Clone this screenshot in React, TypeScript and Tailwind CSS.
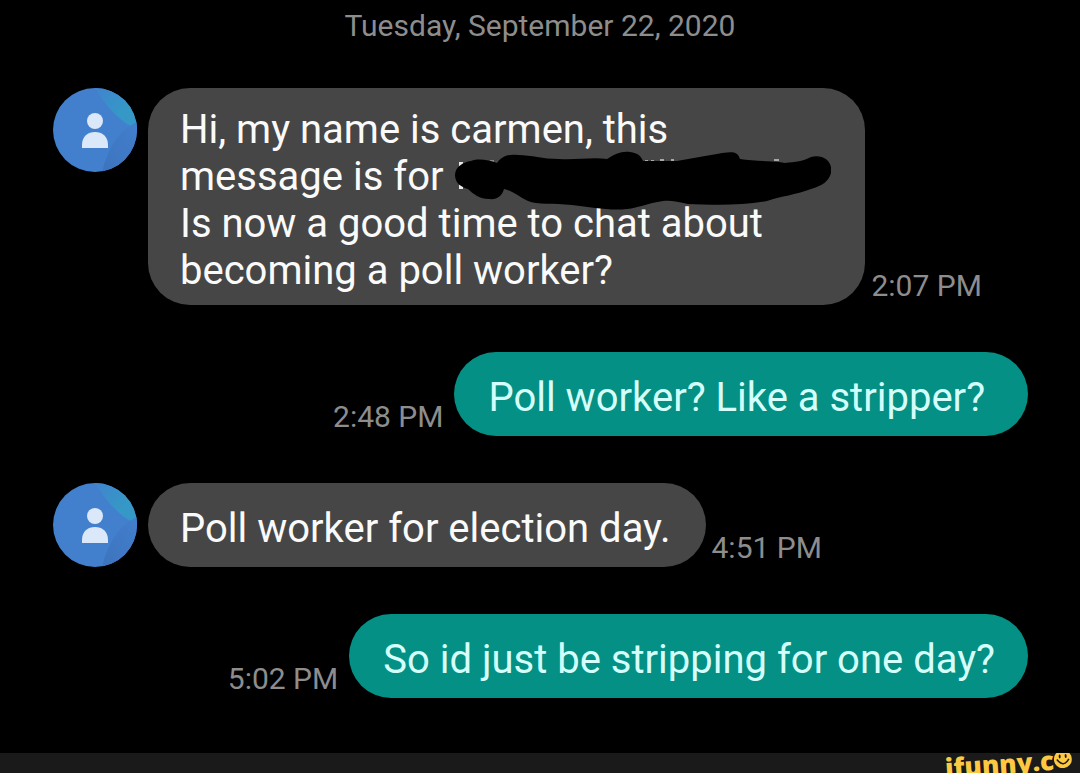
import type { ReactNode } from 'react'

function Avatar() {
  return (
    <svg viewBox="0 0 84 84" className="size-[84px] shrink-0" role="img" aria-label="Contact">
      <defs>
        <clipPath id="avatar-circle">
          <circle cx="42" cy="42" r="42" />
        </clipPath>
        <linearGradient id="avatar-shine" x1="0" y1="0" x2="1" y2="1">
          <stop offset="0" stopColor="#4183cf" />
          <stop offset="0.6" stopColor="#3598c6" />
        </linearGradient>
        <linearGradient id="avatar-shade" x1="0" y1="1" x2="1" y2="0">
          <stop offset="0" stopColor="#3d73bd" />
          <stop offset="1" stopColor="#427fcd" />
        </linearGradient>
      </defs>
      <g clipPath="url(#avatar-circle)">
        <rect width="84" height="84" fill="#427fcd" />
        <path d="M42 0H84V42L74 36C62 28 50 14 42 0Z" fill="url(#avatar-shine)" />
        <path d="M84 34C66 42 55 60 49 84H84Z" fill="url(#avatar-shade)" />
      </g>
      <circle cx="42" cy="33" r="8" fill="#dbe8f9" />
      <path d="M29 60V57C29 48 35 44 42 44S55 48 55 57V60Z" fill="#dbe8f9" />
    </svg>
  )
}

// Marker stroke drawn over the recipient's name
function Redaction() {
  return (
    <span className="relative inline-block h-px w-[377px]">
      <svg
        viewBox="0 0 380 64"
        className="absolute -bottom-[22px] -left-0.5 h-[64px] w-[380px]"
        aria-hidden="true"
      >
        <g fill="#e8e8e8">
          <rect x="8" y="14" width="4" height="4" />
          <rect x="8" y="37" width="4" height="4" />
          <rect x="39" y="12" width="4" height="2" opacity="0.4" />
        </g>
        <path
          d="M194 12h3v2h-3zM200 12h3v2h-3zM209 11h4v2h-4zM220 11h3v2h-3zM323 11h5v2h-5z"
          fill="#a8a8a8"
        />
        <path
          d="M4 27C4 19 12 14 20 13C28 10 37 12 46 15C51 8 57 6 67 7C81 7 91 11 108 11C125 12 142 9 156 11C164 6 170 3 179 4C187 5 190 8 192 13L226 13C239 11 252 8 266 6C280 3 287 3 289 11C301 13 320 13 328 14L334 15C344 14 353 13 360 9C373 6 382 14 380 25C378 33 371 38 360 41C344 47 331 48 316 53C291 58 260 57 237 56C227 54 220 52 212 53C196 55 188 60 176 61C158 63 141 59 121 57C102 55 86 57 77 53C68 49 60 42 53 41C51 48 46 52 38 51C29 51 22 46 17 41C10 39 4 35 4 27Z"
          fill="#000000"
        />
      </svg>
    </span>
  )
}

function Received({ time, children }: { time: string; children: ReactNode }) {
  return (
    <div className="flex items-start">
      <Avatar />
      <div className="ml-[11px] flex min-h-[84px] items-center rounded-[42px] bg-[#464646] pt-[18px] pr-[35px] pb-[11px] pl-8 text-[#fafafa]">
        <p>{children}</p>
      </div>
      <time className="self-end pl-[6px] text-[30px] leading-[38px] text-[#8d8d8d]">{time}</time>
    </div>
  )
}

function Sent({ time, children }: { time: string; children: ReactNode }) {
  return (
    <div className="flex items-end justify-end">
      <time className="pr-[11px] text-[30px] leading-[38px] text-[#8d8d8d]">{time}</time>
      <div className="flex min-h-[84px] items-center rounded-[42px] bg-[#049084] pt-[18px] pr-[33px] pb-[11px] pl-[34px] text-[#d4fffa]">
        <p>{children}</p>
      </div>
    </div>
  )
}

export default function App() {
  return (
    <div className="flex min-h-screen flex-col overflow-hidden bg-black font-[Roboto,sans-serif] text-[40px] leading-[47px]">
      <h1 className="pt-2 text-center text-[30px] leading-9 text-[#8d8d8d]">
        Tuesday, September 22, 2020
      </h1>

      <main className="flex flex-1 flex-col gap-[47px] pt-11 pr-[52px] pb-[54px] pl-[53px]">
        <Received time="2:07 PM">
          Hi, my name is carmen, this
          <br />
          message is for <Redaction />
          <br />
          Is now a good time to chat about
          <br />
          becoming a poll worker?
        </Received>
        <Sent time="2:48 PM">Poll worker? Like a stripper?&nbsp;</Sent>
        <Received time="4:51 PM">Poll worker for election day.</Received>
        <Sent time="5:02 PM">So id just be stripping for one day?</Sent>
      </main>

      <footer className="flex h-5 justify-end overflow-hidden bg-[#1a1a1b] pr-2">
        <div className="flex h-5 -rotate-[4deg] items-center font-['Open_Sans',sans-serif] text-[26px] font-extrabold leading-5 text-[#fdc942]">
          ifunny.c
          <svg viewBox="0 0 18 18" className="size-[18px]" aria-hidden="true">
            <circle cx="9" cy="9" r="9" fill="#fdc942" />
            <ellipse cx="6" cy="6" rx="1" ry="2" fill="#1a1a1b" />
            <ellipse cx="12" cy="6" rx="1" ry="2" fill="#1a1a1b" />
            <path d="M3 9Q9 18 15 9" fill="none" stroke="#1a1a1b" strokeWidth="1.6" />
          </svg>
        </div>
      </footer>
    </div>
  )
}
